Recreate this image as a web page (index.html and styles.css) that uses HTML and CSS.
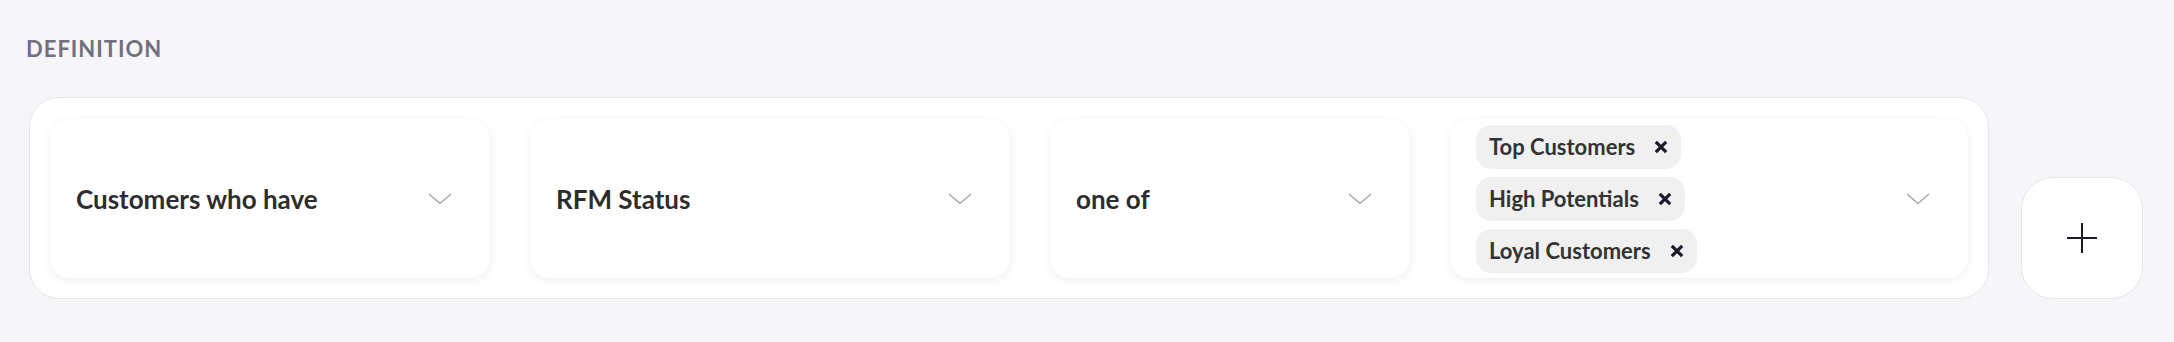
FILE: index.html
```html
<!DOCTYPE html>
<html lang="en">
<head>
<meta charset="utf-8">
<title>Definition</title>
<link rel="stylesheet" href="styles.css">
</head>
<body>
<div class="page">
  <h2 class="section-label">DEFINITION</h2>
  <div class="row">
    <div class="rule">
      <div class="select select-who">
        <span class="select-value">Customers who have</span>
        <svg class="chevron" width="24" height="12" viewBox="0 0 24 12"><polyline points="1,1 12,10.5 23,1" fill="none" stroke="#aaa8b8" stroke-width="1.6"/></svg>
      </div>
      <div class="select select-field">
        <span class="select-value">RFM Status</span>
        <svg class="chevron" width="24" height="12" viewBox="0 0 24 12"><polyline points="1,1 12,10.5 23,1" fill="none" stroke="#aaa8b8" stroke-width="1.6"/></svg>
      </div>
      <div class="select select-op">
        <span class="select-value">one of</span>
        <svg class="chevron" width="24" height="12" viewBox="0 0 24 12"><polyline points="1,1 12,10.5 23,1" fill="none" stroke="#aaa8b8" stroke-width="1.6"/></svg>
      </div>
      <div class="select select-values">
        <div class="tags">
          <span class="tag"><span class="tag-text">Top Customers</span><svg class="tag-x" width="14" height="14" viewBox="0 0 14 14"><path d="M1.8 1.8 L12.2 12.2 M12.2 1.8 L1.8 12.2" stroke="#1c1b2e" stroke-width="3.2" fill="none"/></svg></span>
          <span class="tag"><span class="tag-text">High Potentials</span><svg class="tag-x" width="14" height="14" viewBox="0 0 14 14"><path d="M1.8 1.8 L12.2 12.2 M12.2 1.8 L1.8 12.2" stroke="#1c1b2e" stroke-width="3.2" fill="none"/></svg></span>
          <span class="tag"><span class="tag-text">Loyal Customers</span><svg class="tag-x" width="14" height="14" viewBox="0 0 14 14"><path d="M1.8 1.8 L12.2 12.2 M12.2 1.8 L1.8 12.2" stroke="#1c1b2e" stroke-width="3.2" fill="none"/></svg></span>
        </div>
        <svg class="chevron" width="24" height="12" viewBox="0 0 24 12"><polyline points="1,1 12,10.5 23,1" fill="none" stroke="#aaa8b8" stroke-width="1.6"/></svg>
      </div>
    </div>
    <button class="add-btn" type="button" aria-label="Add condition">
      <svg width="30" height="30" viewBox="0 0 30 30"><path d="M15 0 V30 M0 15 H30" stroke="#1a1a2e" stroke-width="2" fill="none"/></svg>
    </button>
  </div>
</div>
</body>
</html>
```

FILE: styles.css
```css
* { box-sizing: border-box; }

body {
  margin: 0;
  background: #f6f6f8;
  font-family: Lato, "Noto Sans", "Liberation Sans", sans-serif;
}

.page {
  padding: 36px 0 0 26px;
}

.section-label {
  margin: 0;
  font-size: 22px;
  line-height: 26px;
  font-weight: 700;
  letter-spacing: 1px;
  color: #716f80;
}

.row {
  display: flex;
  align-items: flex-end;
  gap: 32px;
  margin-top: 35px;
  padding-left: 3px;
}

.rule {
  display: flex;
  gap: 40px;
  width: 1960px;
  padding: 21px 20px 20px 20px;
  background: #ffffff;
  border: 1px solid #e7e7ea;
  border-radius: 30px;
}

.select {
  display: flex;
  align-items: center;
  justify-content: space-between;
  height: 159px;
  padding: 0 38px 0 26px;
  background: #ffffff;
  border-radius: 20px;
  box-shadow: 0 2px 10px rgba(0, 0, 0, 0.07);
}

.select-who { width: 440px; }
.select-field { width: 480px; }
.select-op { width: 360px; }
.select-values { flex: 1; }

.select-value {
  font-size: 26px;
  font-weight: 700;
  color: #2d2d2d;
}

.chevron { flex: none; }

.tags {
  display: flex;
  flex-direction: column;
  align-items: flex-start;
  gap: 8px;
}

.tag {
  display: flex;
  align-items: center;
  gap: 19px;
  height: 44px;
  padding: 0 13px;
  background: #f0f0f0;
  border-radius: 15px;
}

.tag-text {
  font-size: 22px;
  font-weight: 700;
  color: #333333;
}

.tag-x { flex: none; }

.add-btn {
  display: flex;
  align-items: center;
  justify-content: center;
  width: 122px;
  height: 122px;
  padding: 0;
  background: #ffffff;
  border: 1px solid #e7e7ea;
  border-radius: 32px;
  cursor: pointer;
}
```
